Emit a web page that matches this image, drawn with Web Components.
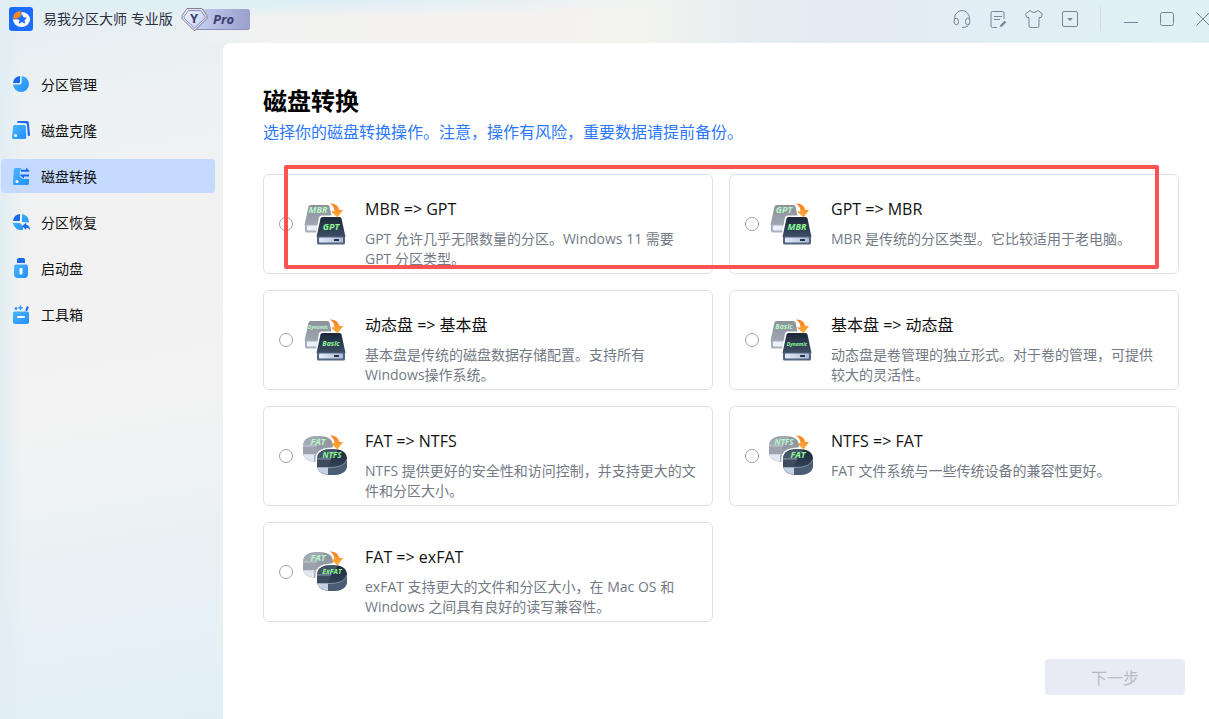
<!DOCTYPE html>
<html lang="zh-CN">
<head>
<meta charset="utf-8">
<title>易我分区大师 专业版</title>
<style>
  html, body { height: 100%; margin: 0; }
  body {
    font-family: "Open Sans", "Noto Sans CJK SC", sans-serif;
    color: #111;
    overflow: hidden;
  }
</style>
</head>
<body>
<partition-app></partition-app>

<script>
const define = (name, html, setup) => {
  const template = document.createElement('template');
  template.innerHTML = html;
  customElements.define(name, class extends HTMLElement {
    connectedCallback() {
      if (this.shadowRoot) return;
      this.attachShadow({ mode: 'open' }).append(template.content.cloneNode(true));
      if (setup) setup(this, this.shadowRoot);
    }
  });
};

/* Sidebar glyphs, 18 x 18 */
const NAV_ICONS = {
  manage: `<path d="M9.6 1A8 8 0 1 1 1 9.6h6.6a2 2 0 0 0 2-2z" fill="url(#g)"/><path d="M8 1v6a1 1 0 0 1-1 1H1A8 8 0 0 1 8 1z" fill="#1769f0"/>`,
  clone: `<path d="M5 1.400Q5.200 0 6.600 0H15q1.600 0 1.800 1.600L18 14q0 .8-.8 1l-1.400-.2L15 3.600Q14.800 2.300 13.600 2.200L5 1.800z" fill="#1769f0"/><path d="M2.600 4h9.800q1.200 0 1.300 1.200l.5 11q0 1.800-1.700 1.800H1.800Q0 18 0 16.400L1.200 5.200Q1.400 4 2.600 4z" fill="url(#g)"/><circle cx="3.600" cy="14.600" r="1.500" fill="#fff"/>`,
  convert: `<path d="M3.400 1h6.200L7.800 4.200v5.600L11 12h6v4.200q0 1.800-1.800 1.800H2.600Q1 18 1 16.400L1.800 2.500Q2 1 3.400 1z" fill="url(#g)"/><path d="M9 2.800h5V.4L17.400 3.800V4.800H9zM17 9.600h-5v2.200L8.400 8.500V7.600H17z" fill="#1769f0"/><circle cx="5" cy="14.600" r="1.500" fill="#fff"/>`,
  recover: `<path d="M10 1a8 8 0 0 1 7 8.500L10 9zM1 10h7l3 3.500v3.300A8 8 0 0 1 1 10z" fill="url(#g)"/><path d="M8 1v6a1 1 0 0 1-1 1H1A8 8 0 0 1 8 1z" fill="#1769f0"/><path d="M14.200 9.600v2.200q3.600.5 3.800 5.200-1.500-2.200-3.800-2.200V17l-4-3.700z" fill="#1769f0"/>`,
  boot: `<path d="M5 4V.6Q5-1 6.600-1h4.800Q13-1 13 .6V4z" fill="#1769f0"/><path d="M2 7.500q0-2 2-2h10q2 0 2 2v7.500q0 4-3.500 4h-7Q2 19 2 15z" fill="url(#g)"/><rect x="7.500" y="9" width="3" height="6.500" rx="1" fill="#fff"/>`,
  tools: `<path d="M1 8q0-1.500 1.500-1.500h13Q17 6.500 17 8v9q0 2-2 2H3q-2 0-2-2z" fill="url(#g)"/><rect x="5" y="11" width="8" height="2" rx="1" fill="#fff"/><path d="M8.500.5v4.400M6.300 2.700h4.400M4 2v3M2.500 3.500h3" stroke="#2f9bff" stroke-width="1.400"/><path d="M16 1.500 14 5.800" stroke="#1769f0" stroke-width="2"/>`
};

define('nav-item', `
  <style>
    :host { display: block; }
    a {
      display: flex; align-items: center; gap: 11px;
      height: 34px; padding-left: 11px; border-radius: 4px;
      color: #111; text-decoration: none; font-size: 14px; line-height: 20px;
    }
    :host([active]) a { background: #c5daff; }
    svg { width: 18px; height: 18px; flex: none; overflow: visible; }
    span { padding-top: 2px; }
  </style>
  <a href="#">
    <svg viewBox="0 0 18 18" aria-hidden="true">
      <defs><linearGradient id="g" x1="0" y1="0" x2="1" y2="1"><stop offset="0" stop-color="#4db4ff"/><stop offset="1" stop-color="#1e90ff"/></linearGradient></defs>
      <g></g>
    </svg>
    <span><slot></slot></span>
  </a>`,
  (host, root) => {
    root.querySelector('g').innerHTML = NAV_ICONS[host.getAttribute('icon')];
    if (host.hasAttribute('active')) root.querySelector('a').setAttribute('aria-current', 'page');
  });

/* Title bar glyphs, 24 x 24 */
const BAR_ICONS = {
  support: `<path d="M4.500 13v-1.500a7.500 8 0 0 1 15 0V13M19.500 16q-1 4.500-7.500 4.500"/><ellipse cx="6.300" cy="14.500" rx="2.200" ry="3.300"/><ellipse cx="17.700" cy="14.500" rx="2.200" ry="3.300"/>`,
  feedback: `<path d="M11 20.500H6.500q-1.500 0-1.500-1.500V6q0-1.500 1.500-1.500h10Q18 4.500 18 6v6M8 9.500h8M8 12.500h6"/><path d="m14.500 19.500 5-5" stroke-width="2.400"/>`,
  skin: `<path d="M8 3.500 3.500 7 5 10.500h2v8.500q0 1.500 1.500 1.500h7q1.500 0 1.500-1.500v-8.500h2L20.500 7 16 3.500q-4 4-8 0z"/>`,
  menu: `<rect x="4.500" y="4.500" width="15" height="15" rx="1.500"/><path d="M10 11.500h4l-2 2z" fill="currentColor"/>`,
  minimize: `<path d="M5 15.500h14"/>`,
  maximize: `<rect x="5.500" y="5.500" width="13" height="13" rx="2"/>`,
  close: `<path d="m5.500 5.500 13 13M18.500 5.500l-13 13"/>`
};

define('bar-button', `
  <style>
    :host { display: block; height: 24px; width: 24px; flex: none; }
    :host([clipped]) { width: 18px; }
    button {
      display: block; width: 100%; height: 100%; padding: 0; border: 0;
      background: none; color: #7b839b; overflow: hidden;
    }
    svg { display: block; width: 24px; height: 24px; fill: none; stroke: currentColor; stroke-width: 1; }
  </style>
  <button type="button"><svg viewBox="0 0 24 24" aria-hidden="true"></svg></button>`,
  (host, root) => {
    root.querySelector('svg').innerHTML = BAR_ICONS[host.getAttribute('icon')];
    root.querySelector('button').setAttribute('aria-label', host.getAttribute('label'));
  });

define('pro-badge', `
  <style>
    :host { display: block; width: 70px; height: 26px; }
    svg { display: block; width: 70px; height: 26px; }
    text { font-family: "Open Sans", sans-serif; font-weight: 700; fill: #3c3f70; }
  </style>
  <svg viewBox="0 0 70 26">
    <defs>
      <linearGradient id="b"><stop offset="0" stop-color="#c9d3f6"/><stop offset="1" stop-color="#9a9fcb"/></linearGradient>
      <linearGradient id="d" x2="1" y2="1"><stop offset="0" stop-color="#f2f5ff"/><stop offset="1" stop-color="#c3cbee"/></linearGradient>
    </defs>
    <path d="M10 3h56q3 0 3 3v15q0 3-3 3H13z" fill="url(#b)"/>
    <path d="M15 23.500h51q2 0 2.500-2" fill="none" stroke="#8d8fba"/>
    <path d="M6 2.500h15l5 7v3L14 24.500h-1L1 12.500v-3z" fill="url(#d)" stroke="#8b7c8c"/>
    <path d="M7.500 4.500h12l4.500 6v1.500L13.500 22 3 12v-1.500z" fill="none" stroke="#8790bd"/>
    <text x="13" y="17" font-size="13" text-anchor="middle">Y</text>
    <text x="32" y="18" font-size="13" font-style="italic">Pro</text>
  </svg>`);

define('title-bar', `
  <style>
    :host { display: flex; align-items: center; height: 38px; padding-bottom: 5px; flex: none; }
    .logo { width: 24px; height: 24px; margin-left: 9px; flex: none; }
    h1 { margin: 0 8px 0 10px; font-size: 14px; line-height: 20px; font-weight: 400; color: #2a3142; white-space: nowrap; }
    .actions { display: flex; align-items: center; gap: 12px; margin-left: auto; }
    .rule { width: 1px; height: 24px; margin: 0 6px; background: #d4dbe6; }
  </style>
  <svg class="logo" viewBox="0 0 24 24" aria-hidden="true">
    <rect width="24" height="24" rx="3" fill="#1b6cff"/>
    <ellipse cx="12.500" cy="12.500" rx="8.500" ry="7.500" fill="#fff"/>
    <path d="M12 12H3.500Q4 4 12 3.500z" fill="#ff8a14" stroke="#1b6cff" stroke-width=".8"/>
    <path d="m13 7 1.500 3.300 3.700.4-2.700 2.500.8 3.600L13 15l-3.300 1.800.8-3.600-2.700-2.500 3.700-.4z" fill="#1b6cff"/>
  </svg>
  <h1>易我分区大师 专业版</h1>
  <pro-badge></pro-badge>
  <div class="actions">
    <bar-button icon="support" label="支持"></bar-button>
    <bar-button icon="feedback" label="反馈"></bar-button>
    <bar-button icon="skin" label="皮肤"></bar-button>
    <bar-button icon="menu" label="菜单"></bar-button>
    <span class="rule"></span>
    <bar-button icon="minimize" label="最小化"></bar-button>
    <bar-button icon="maximize" label="最大化"></bar-button>
    <bar-button icon="close" label="关闭" clipped></bar-button>
  </div>`);

/* Pairs of drives: boxes for disk styles, cylinders for file systems */
const box = `
  <path d="M5.500 0h17q1.600 0 2 1.600L28.500 20H-.5L3.500 1.600Q4 0 5.500 0z" fill="url(#dark)"/>
  <path d="M0 19.500h28V26q0 1.500-1.500 1.500h-25Q0 27.500 0 26z" fill="#53647e"/>
  <rect x="2" y="20.500" width="24" height="5" rx="1" fill="url(#face)"/>
  <rect x="17" y="22" width="5" height="2" rx=".5" fill="#26303f"/>`;
const disc = `
  <path d="M0 9Q1 0 15 0T30 9V17Q29 26 15 26T0 17z" fill="url(#dark)"/>
  <path d="M.3 7.500Q3 0 15 0L21 .8 14.500 10H0z" fill="#6c7d93" opacity=".5"/>
  <path d="M14 10 11 19H0V10z" fill="#3d4a60"/>
  <path d="M0 18.500h11v7.200Q2 24.500 0 18.500z" fill="#c6d2e4"/>
  <path d="M11 19q18 .5 19-9v7Q29 26 15 26L11 25.700z" fill="#4b5c75"/>
  <path d="M0 10h14M30 10Q28 19 11 18.500H0" fill="none" stroke="#a9b7ca" stroke-width=".7"/>`;

define('drive-pair', `
  <style>
    :host { display: block; width: 44px; height: 48px; }
    svg { display: block; width: 44px; height: 48px; overflow: visible; }
    text { font-family: "Open Sans", sans-serif; font-weight: 700; font-style: italic; text-anchor: middle; fill: #8dfa94; }
    text.old { fill: #b9f5c6; }
  </style>
  <svg viewBox="0 0 44 48">
    <defs>
      <linearGradient id="dark" x2="0" y2="1"><stop offset="0" stop-color="#1c2838"/><stop offset="1" stop-color="#3d4e66"/></linearGradient>
      <linearGradient id="face"><stop offset="0" stop-color="#e4ecfa"/><stop offset="1" stop-color="#aabbd8"/></linearGradient>
      <linearGradient id="warm" x2="0" y2="1"><stop offset="0" stop-color="#ff7a1c"/><stop offset="1" stop-color="#ffb23e"/></linearGradient>
    </defs>
    <g class="back" opacity=".5"></g>
    <text class="old"></text>
    <g class="halo"></g>
    <g class="front"></g>
    <text class="new"></text>
    <path d="M27 3.500q7.500-.5 9.500 6.500H40L34.500 17.500 28 11.500l3.400-.2Q31.500 6.500 27 3.500z" fill="url(#warm)"/>
  </svg>`,
  (host, root) => {
    const isDisc = host.getAttribute('kind') === 'disc';
    const q = s => root.querySelector(s);
    q('.back').innerHTML = q('.front').innerHTML = isDisc ? disc : box;
    q('.back').setAttribute('transform', isDisc ? 'translate(0 4)' : 'translate(2 5)');
    q('.front').setAttribute('transform', 'translate(14 17)');
    q('.halo').innerHTML = isDisc
      ? '<path d="M12.500 26Q13.500 15.500 29 15.500T45.500 26V34Q44 44.500 29 44.500T12.500 34z" fill="#fff"/>'
      : '<path d="M18.500 15.500h20L44 36v11H12.500V36l3.500-18.500q.5-2 2.500-2z" fill="#fff"/>';
    const label = (sel, value, x, y) => {
      const t = q(sel);
      t.textContent = value;
      t.setAttribute('x', x);
      t.setAttribute('y', y);
      t.setAttribute('font-size', [9, 9, 9, 9, 8, 7, 6, 5][value.length]);
    };
    label('.old', host.getAttribute('from'), 15, 13);
    label('.new', host.getAttribute('to'), isDisc ? 29 : 28, isDisc ? 26 : 30);
  });

define('convert-option', `
  <style>
    :host { display: block; }
    label {
      display: flex; box-sizing: border-box; height: 100%; min-height: 100px;
      padding: 22px 12px 4px 15px; border: 1px solid #dae0ed; border-radius: 6px;
    }
    input {
      appearance: none; flex: none; align-self: center; box-sizing: border-box;
      width: 14px; height: 14px; margin: -18px 0 0; border: 1px solid #99a1b3; border-radius: 50%; background: #fff;
    }
    input:checked { border: 4px solid #2b74ff; }
    .mark { display: flex; align-items: center; margin: -18px 18px 0 10px; }
    h3 { margin: 0 0 8px; font-size: 16px; line-height: 24px; font-weight: 400; color: #111; }
    p { margin: 0; font-size: 14px; line-height: 20px; color: #737985; }
  </style>
  <label>
    <input type="radio" name="conversion">
    <span class="mark"></span>
    <div class="copy"><h3><slot name="title"></slot></h3><p><slot></slot></p></div>
  </label>`,
  (host, root) => {
    const pair = document.createElement('drive-pair');
    for (const name of ['kind', 'from', 'to']) pair.setAttribute(name, host.getAttribute(name));
    root.querySelector('.mark').append(pair);
    root.querySelector('input').addEventListener('change', () => {
      for (const other of host.parentElement.querySelectorAll('convert-option')) {
        if (other !== host) other.shadowRoot.querySelector('input').checked = false;
      }
    });
  });

define('convert-page', `
  <style>
    :host {
      display: flex; flex-direction: column; box-sizing: border-box; min-width: 0;
      padding: 42px 24px 24px 40px; background: #fff; border-top-left-radius: 8px;
    }
    h2 { margin: 0; font-size: 24px; line-height: 32px; font-weight: 700; color: #000; }
    .note { margin: 3px 0 0; font-size: 16px; line-height: 24px; color: #2b78ff; }
    .grid {
      position: relative; display: grid; grid-template-columns: 1fr 1fr; gap: 16px;
      margin: 30px 6px 0 0;
    }
    .highlight {
      position: absolute; top: -9px; left: 21px; right: 20px; height: 104px;
      box-sizing: border-box; border: 4px solid #fb5252; border-radius: 2px; pointer-events: none;
    }
    button {
      align-self: flex-end; width: 140px; height: 36px; margin-top: auto; padding: 2px 0 0;
      border: 0; border-radius: 4px; background: #e8ebf3; color: #b8bbc3;
      font: inherit; font-size: 16px; line-height: 24px;
    }
  </style>
  <h2>磁盘转换</h2>
  <p class="note">选择你的磁盘转换操作。注意，操作有风险，重要数据请提前备份。</p>
  <div class="grid">
    <convert-option kind="box" from="MBR" to="GPT"><span slot="title">MBR =&gt; GPT</span>GPT 允许几乎无限数量的分区。Windows 11 需要 GPT 分区类型。</convert-option>
    <convert-option kind="box" from="GPT" to="MBR"><span slot="title">GPT =&gt; MBR</span>MBR 是传统的分区类型。它比较适用于老电脑。</convert-option>
    <convert-option kind="box" from="Dynamic" to="Basic"><span slot="title">动态盘 =&gt; 基本盘</span>基本盘是传统的磁盘数据存储配置。支持所有Windows操作系统。</convert-option>
    <convert-option kind="box" from="Basic" to="Dynamic"><span slot="title">基本盘 =&gt; 动态盘</span>动态盘是卷管理的独立形式。对于卷的管理，可提供较大的灵活性。</convert-option>
    <convert-option kind="disc" from="FAT" to="NTFS"><span slot="title">FAT =&gt; NTFS</span>NTFS 提供更好的安全性和访问控制，并支持更大的文件和分区大小。</convert-option>
    <convert-option kind="disc" from="NTFS" to="FAT"><span slot="title">NTFS =&gt; FAT</span>FAT 文件系统与一些传统设备的兼容性更好。</convert-option>
    <convert-option kind="disc" from="FAT" to="ExFAT"><span slot="title">FAT =&gt; exFAT</span>exFAT 支持更大的文件和分区大小，在 Mac OS 和 Windows 之间具有良好的读写兼容性。</convert-option>
    <div class="highlight"></div>
  </div>
  <button type="button" disabled>下一步</button>`);

define('partition-app', `
  <style>
    :host {
      display: flex; flex-direction: column; min-height: 100vh;
      background:
        linear-gradient(90deg, #e2eef3 0, #e2eef300 24px),
        radial-gradient(ellipse 50% 18px at 8% 0, #e0eff5 40%, #e0eff500 100%),
        linear-gradient(90deg, #eef1f100 14%, #f2f2f1 26%, #f4f2f1 42%, #f3f3ef 53%, #e5eef0 62%, #e3ebf3 72%, #e1eff5 85%, #e1f0f4 100%) top / 100% 43px no-repeat,
        linear-gradient(170deg, #e4eef2 0, #ecf1f3 14%, #f2f1f1 34%, #f3f3f3 56%, #e9f1f4 76%, #e2f0f6 100%) left / 240px 100% no-repeat,
        #eef1f1;
    }
    .body { display: grid; grid-template-columns: 223px minmax(0, 1fr); flex: 1; }
    nav { display: flex; flex-direction: column; gap: 12px; padding: 24px 8px 24px 1px; }
  </style>
  <title-bar></title-bar>
  <div class="body">
    <nav>
      <nav-item icon="manage">分区管理</nav-item>
      <nav-item icon="clone">磁盘克隆</nav-item>
      <nav-item icon="convert" active>磁盘转换</nav-item>
      <nav-item icon="recover">分区恢复</nav-item>
      <nav-item icon="boot">启动盘</nav-item>
      <nav-item icon="tools">工具箱</nav-item>
    </nav>
    <convert-page></convert-page>
  </div>`);
</script>
</body>
</html>
